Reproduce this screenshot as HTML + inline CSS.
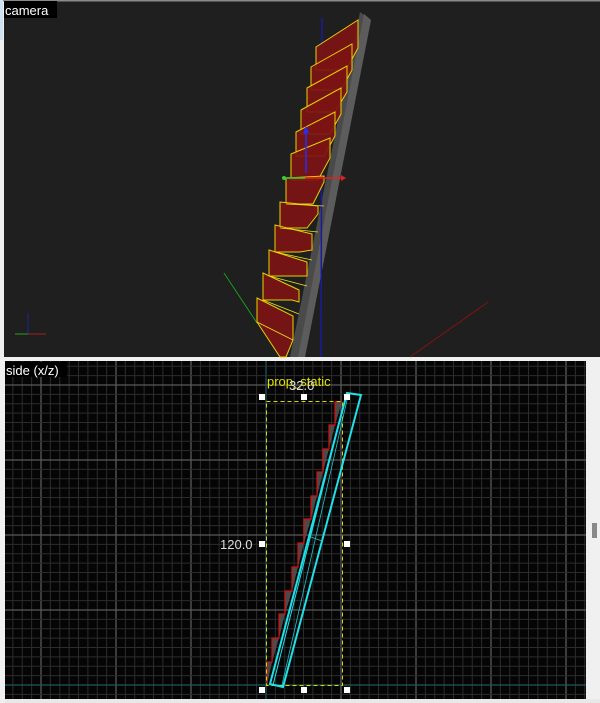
<!DOCTYPE html>
<html><head><meta charset="utf-8"><style>
html,body{margin:0;padding:0;width:600px;height:703px;overflow:hidden;background:#f0f0f0;font-family:"Liberation Sans","DejaVu Sans",sans-serif}
svg{position:absolute;left:0;top:0}
</style></head><body>
<svg width="600" height="703" xmlns="http://www.w3.org/2000/svg">
<rect x="0" y="0" width="600" height="703" fill="#f0f0f0"/>
<rect x="4" y="1" width="596" height="356" fill="#1f1f1f"/>
<rect x="0" y="0" width="600" height="1.5" fill="#8a8a8a"/>
<rect x="0" y="0" width="3" height="40" fill="#cfe0f0"/>
<rect x="4" y="1" width="53" height="17" fill="#000"/>
<text x="5" y="15" font-size="13" fill="#fff">camera</text>
<line x1="224" y1="273" x2="257" y2="323" stroke="#1a9a1a" stroke-width="1"/>
<line x1="410" y1="357" x2="488" y2="302" stroke="#8a1010" stroke-width="1"/>
<line x1="28" y1="313" x2="28" y2="334" stroke="#2020a0"/>
<line x1="15" y1="334" x2="28" y2="334" stroke="#20a020"/>
<line x1="28" y1="334" x2="46" y2="334" stroke="#a02020"/>
<polygon points="360,12 371,20 305,357 290,357" fill="#4a4a4a"/>
<polygon points="364,14 371,20 305,357 298,357" fill="#5c5c5c"/>
<line x1="322" y1="18" x2="321" y2="357" stroke="#1a1aa0" stroke-width="1.5"/>
<g stroke="#e8d000" stroke-width="1" fill="#7c1414" fill-opacity="0.92">
<polygon points="316,47 358,20 358,48 346,70 316,70"/>
<polygon points="311,67 352,44 352,70 341,90 311,90"/>
<polygon points="307,88 347,66 347,92 335,112 307,112"/>
<polygon points="301,110 341,88 341,114 330,134 301,134"/>
<polygon points="296,132 335,112 335,136 324,156 296,156"/>
<polygon points="291,154 330,138 330,158 318,180 291,180"/>
<polygon points="286,178 324,176 324,182 313,204 286,204"/>
<polygon points="280,202 318,206 318,214 307,228 280,228"/>
<polygon points="275,225 312,234 312,250 300,252 275,252"/>
<polygon points="269,250 307,262 307,276 295,276 269,276"/>
<polygon points="263,273 299,290 299,302 292,300 263,300"/>
<polygon points="257,298 293,316 293,340 286,357 280,357 257,322"/>
</g>
<g stroke="#f0e020" stroke-width="0.8" fill="none">
<line x1="286" y1="204" x2="324" y2="206"/><line x1="280" y1="228" x2="318" y2="232"/>
<line x1="275" y1="252" x2="312" y2="260"/><line x1="269" y1="276" x2="307" y2="286"/>
<line x1="263" y1="300" x2="299" y2="314"/><line x1="257" y1="322" x2="293" y2="340"/>
</g>
<line x1="285" y1="178" x2="343" y2="178" stroke="#e02020" stroke-width="1.5"/>
<line x1="285" y1="178" x2="305" y2="178" stroke="#30d030" stroke-width="1.5"/>
<circle cx="284" cy="178" r="2" fill="#30d030"/>
<polygon points="346,178 341,175 341,181" fill="#e02020"/>
<line x1="306" y1="173" x2="306" y2="133" stroke="#2030ff" stroke-width="1.5"/>
<polygon points="306,126 303,133 309,133" fill="#2030ff"/>
<rect x="5" y="361" width="581" height="338" fill="#050505"/>
<rect x="5" y="699" width="595" height="4" fill="#e8e8e8"/>
<rect x="592" y="523" width="5" height="15" fill="#888"/>
</svg>
<svg width="600" height="703" xmlns="http://www.w3.org/2000/svg">
<defs><clipPath id="c"><rect x="5" y="361" width="581" height="338"/></clipPath></defs>
<g clip-path="url(#c)" id="g2"></g>
<rect x="5" y="362" width="62" height="15" fill="#000"/>
<text x="6" y="375" font-size="13" fill="#fff">side (x/z)</text>
<g fill="#555" opacity="0.85">
<polygon points="267,662 272,662 267,685"/><polygon points="272,638 279,638 272,662"/>
<polygon points="279,614 285,614 279,638"/><polygon points="285,591 292,591 285,614"/>
<polygon points="292,567 298,567 292,591"/><polygon points="298,543 304,543 298,567"/>
<polygon points="304,519 311,519 304,543"/><polygon points="311,496 317,496 311,519"/>
<polygon points="317,472 323,472 317,496"/><polygon points="323,449 329,449 323,472"/>
<polygon points="329,425 335,425 329,449"/><polygon points="335,402 342,402 335,425"/>
</g>
<path d="M267,685 V662 H272 V638 H279 V614 H285 V591 H292 V567 H298 V543 H304 V519 H311 V496 H317 V472 H323 V449 H329 V425 H335 V402 H342" fill="none" stroke="#d01010" stroke-width="1.2"/>
<rect x="266.5" y="401.5" width="76" height="284" fill="none" stroke="#d8d800" stroke-dasharray="4,3" stroke-width="1"/>
<polygon points="347,393 361,395 283,687 270,684" fill="none" stroke="#20e0e8" stroke-width="2"/>
<line x1="345" y1="400" x2="273" y2="685" stroke="#20e0e8" stroke-width="1"/>
<line x1="347" y1="400" x2="282" y2="685" stroke="#20c0c8" stroke-width="0.8"/>
<line x1="311" y1="537" x2="322" y2="541" stroke="#20c0c8" stroke-width="0.8"/>
<g fill="#fff">
<rect x="259" y="394" width="6" height="6"/><rect x="301" y="394" width="6" height="6"/><rect x="344" y="394" width="6" height="6"/>
<rect x="259" y="541" width="6" height="6"/><rect x="344" y="541" width="6" height="6"/>
<rect x="259" y="687" width="6" height="6"/><rect x="301" y="687" width="6" height="6"/><rect x="344" y="687" width="6" height="6"/>
</g>
<text x="267" y="386" font-size="13" fill="#e0e000">prop_static</text>
<text x="289" y="390" font-size="13" fill="#ddd">32.0</text>
<text x="220" y="549" font-size="13" fill="#ddd">120.0</text>
</svg>
<script>
(function(){
var g=document.getElementById('g2'),s='';
for(var i=-40;i<40;i++){var x=266+i*9.375;if(x<5||x>586)continue;var maj=(i%8===0);
s+='<line x1="'+x+'" y1="361" x2="'+x+'" y2="699" stroke="'+(maj?'#5a5a5a':'#2c2c2c')+'" stroke-width="'+(maj?1.3:1)+'"/>';}
for(var j=-40;j<10;j++){var y=685+j*9.375;if(y<361||y>699)continue;var maj=(j%8===0);
s+='<line x1="5" y1="'+y+'" x2="586" y2="'+y+'" stroke="'+(maj?'#5a5a5a':'#2c2c2c')+'" stroke-width="'+(maj?1.3:1)+'"/>';}
s+='<line x1="266" y1="361" x2="266" y2="699" stroke="#0f5050"/>';
s+='<line x1="5" y1="685" x2="586" y2="685" stroke="#0f5a5a"/>';
g.innerHTML=s;})();
</script>
</body></html>
